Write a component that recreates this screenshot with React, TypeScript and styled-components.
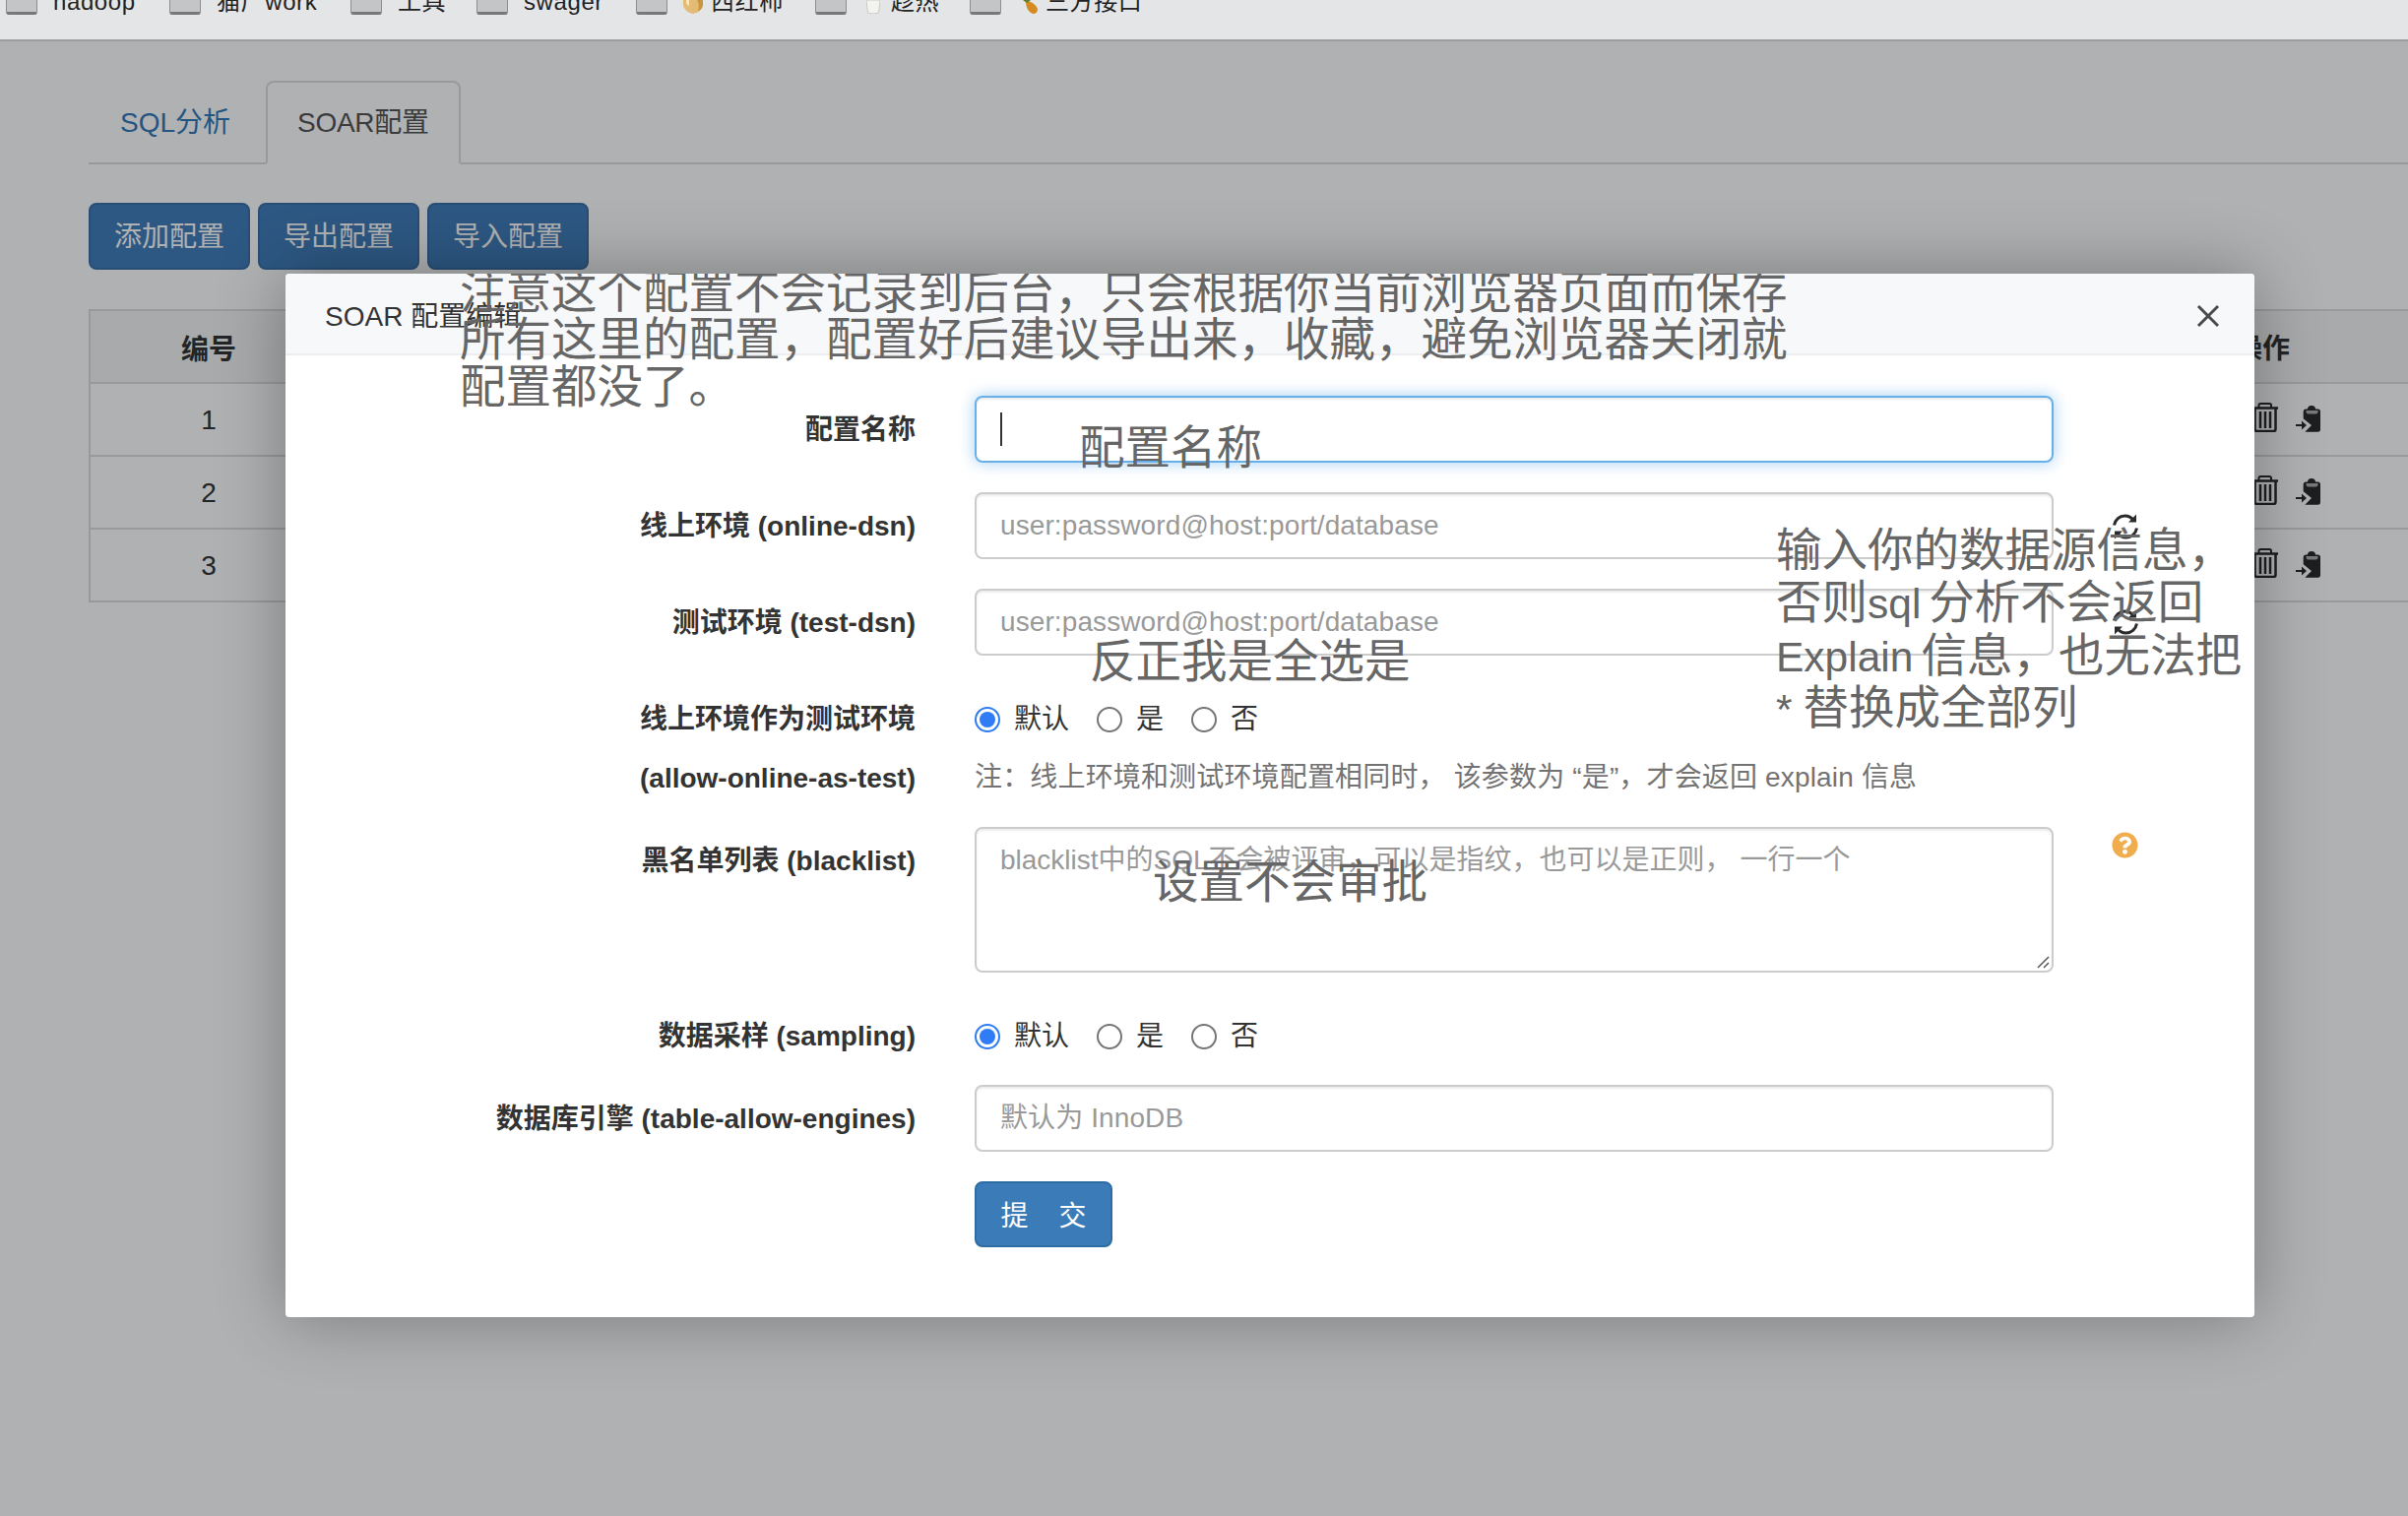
import React from 'react';
import styled, { createGlobalStyle } from 'styled-components';
import { FaQuestionCircle } from 'react-icons/fa';

const CJK = `"Liberation Sans", "Noto Sans CJK SC", sans-serif`;

const Global = createGlobalStyle`
  html, body { margin: 0; padding: 0; background: #fff; }
  body { font-family: ${CJK}; font-size: 28px; color: #333; }
  #root { width: 2446px; height: 1540px; overflow: hidden; position: relative; }
`;

const Browser = styled.div`
  width: 2446px;
  height: 1540px;
  position: relative;
  overflow: hidden;
`;

const BookmarkBar = styled.div`
  height: 42px;
  box-sizing: border-box;
  background: #e4e5e7;
  overflow: hidden;
  position: relative;
  z-index: 3;
  border-bottom: 2px solid #9c9d9f;
`;

const BookmarkTrack = styled.div`
  height: 16px;
  display: flex;
  align-items: flex-end;
  padding-left: 6px;
  font-size: 24px;
  line-height: 28px;
  letter-spacing: 0.6px;
  color: #222;
`;

const Bookmark = styled.div<{ $width: number }>`
  display: flex;
  align-items: flex-end;
  flex: none;
  width: ${(p) => p.$width}px;
  height: 16px;
`;

const Folder = styled.span`
  width: 32px;
  height: 15px;
  box-sizing: border-box;
  background: #c4c5c7;
  border: 1px solid #8d8e90;
  border-top: 0;
  border-bottom: 3px solid #77787a;
  border-radius: 0 0 3px 3px;
  flex: none;
  align-self: flex-start;
`;

const BookmarkIcon = styled.svg<{ $left: number }>`
  flex: none;
  align-self: flex-start;
  margin-left: ${(p) => p.$left}px;
`;

const BookmarkText = styled.span<{ $gap: number }>`
  margin-left: ${(p) => p.$gap}px;
  height: 16px;
  display: flex;
  align-items: flex-end;
  white-space: pre;
`;

const Page = styled.main`
  padding: 40px 0 0 90px;
`;

const Tabs = styled.nav`
  display: flex;
  height: 83px;
  border-bottom: 2px solid #ddd;
  box-sizing: content-box;
`;

const Tab = styled.a<{ $active?: boolean }>`
  box-sizing: border-box;
  height: 85px;
  padding: 21px 30px 19px;
  line-height: 40px;
  letter-spacing: ${(p) => (p.$active ? -0.3 : 0)}px;
  margin-left: ${(p) => (p.$active ? 4 : 0)}px;
  color: ${(p) => (p.$active ? '#555' : '#337ab7')};
  background: ${(p) => (p.$active ? '#fff' : 'transparent')};
  border: 2px solid ${(p) => (p.$active ? '#ddd' : 'transparent')};
  border-bottom-color: ${(p) => (p.$active ? '#fff' : 'transparent')};
  border-radius: 8px 8px 0 0;
`;

const Toolbar = styled.div`
  display: flex;
  gap: 8px;
  margin-top: 39px;
`;

const ToolButton = styled.button`
  width: 164px;
  height: 68px;
  background: #427ebb;
  color: #fff;
  border: 2px solid #3a70a8;
  border-radius: 8px;
  padding: 0 0 4px;
  font: inherit;
`;

const Table = styled.div`
  margin-top: 40px;
  width: 2500px;
  border-top: 2px solid #ddd;
  border-left: 2px solid #ddd;
`;

const TableRow = styled.div<{ $head?: boolean }>`
  display: grid;
  grid-template-columns: 240px 1fr;
  height: 74px;
  box-sizing: border-box;
  border-bottom: 2px solid #ddd;
  background: ${(p) => (p.$head ? '#f5f5f5' : 'transparent')};
  font-weight: ${(p) => (p.$head ? 700 : 400)};
  align-items: center;
`;

const IdCell = styled.div`
  text-align: center;
  color: #333;
  padding-top: 1px;
`;

const ActionCell = styled.div<{ $head?: boolean }>`
  display: flex;
  align-items: flex-end;
  padding-left: ${(p) => (p.$head ? 1938 : 1956)}px;
  margin-top: ${(p) => (p.$head ? 0 : -4)}px;
  color: #333;
  gap: 18px;
`;

const Backdrop = styled.div`
  position: absolute;
  inset: 42px 0 0 0;
  background: rgba(0, 2, 6, 0.31);
`;

const ModalShadow = styled.div`
  position: absolute;
  left: 290px;
  top: 278px;
  width: 2000px;
  height: 1060px;
  border-radius: 4px;
  box-shadow: 0 0 70px rgba(0, 0, 0, 0.32);
`;

const Modal = styled.section`
  position: absolute;
  left: 290px;
  top: 278px;
  width: 2000px;
  height: 1060px;
  background: #fff;
  border-radius: 4px;
  overflow: hidden;
`;

const ModalHead = styled.header`
  height: 83px;
  box-sizing: border-box;
  background: #f7f8fa;
  border-bottom: 2px solid #eceef1;
  padding: 0 40px;
  display: flex;
  align-items: center;
  justify-content: space-between;
  color: #333;
`;

const ModalTitle = styled.h4`
  margin: 0;
  font-weight: 400;
  font-size: 28px;
`;

const Close = styled.span`
  display: flex;
  margin: 5px -5px 0 0;
`;

const Form = styled.form`
  display: grid;
  grid-template-columns: 640px 1156px 1fr;
  padding-top: 41px;
`;

const Label = styled.label`
  grid-column: 1;
  text-align: right;
  font-weight: 700;
  line-height: 40px;
  color: #333;
  padding-top: 15px;
`;

const Control = styled.div<{ $bottom?: number }>`
  grid-column: 2;
  margin-left: 60px;
  margin-bottom: ${(p) => p.$bottom ?? 30}px;
`;

const Side = styled.div`
  grid-column: 3;
  padding-left: 59px;
  padding-top: 5px;
  color: #f0ad4e;
  display: flex;
  align-items: flex-start;
`;

const Input = styled.div<{ $focus?: boolean }>`
  height: 68px;
  box-sizing: border-box;
  border: 2px solid ${(p) => (p.$focus ? '#66afe9' : '#ccc')};
  border-radius: 8px;
  padding: 0 24px 1px;
  line-height: 38px;
  display: flex;
  align-items: center;
  color: #999;
  letter-spacing: 0.1px;
  box-shadow: ${(p) =>
    p.$focus
      ? 'inset 0 2px 2px rgba(0,0,0,.075), 0 0 16px rgba(102,175,233,.6)'
      : 'inset 0 2px 2px rgba(0,0,0,.075)'};
`;

const Caret = styled.span`
  width: 2px;
  height: 34px;
  background: #333;
`;

const TextArea = styled.div`
  height: 148px;
  box-sizing: border-box;
  border: 2px solid #ccc;
  border-radius: 8px;
  padding: 12px 24px;
  line-height: 40px;
  color: #999;
  white-space: pre;
  position: relative;
  box-shadow: inset 0 2px 2px rgba(0, 0, 0, 0.075);
`;

const Grip = styled.svg`
  position: absolute;
  right: 2px;
  bottom: 2px;
`;

const RadioRow = styled.div`
  display: flex;
  align-items: center;
  padding-top: 14px;
  height: 41px;
  line-height: 40px;
`;

const RadioCircle = styled.span<{ $checked?: boolean }>`
  width: 26px;
  height: 26px;
  box-sizing: border-box;
  border-radius: 50%;
  border: 2px solid ${(p) => (p.$checked ? '#2f7cf6' : '#767676')};
  padding: 3px;
  margin-right: 14px;
  flex: none;
  &::after {
    content: '';
    display: ${(p) => (p.$checked ? 'block' : 'none')};
    width: 100%;
    height: 100%;
    border-radius: 50%;
    background: #2f7cf6;
  }
`;

const RadioText = styled.span`
  margin-right: 28px;
  color: #333;
`;

const Help = styled.div`
  padding-top: 14px;
  line-height: 40px;
  color: #737373;
  white-space: pre;
  letter-spacing: 0.16px;
`;

const Submit = styled.button`
  width: 140px;
  height: 67px;
  background: #3b7bb8;
  color: #fff;
  border: 2px solid #2e6da4;
  border-radius: 8px;
  font: inherit;
  padding: 0 0 2px;
  white-space: pre;
`;

const Note = styled.div<{ $x: number; $y: number; $lh?: number }>`
  position: absolute;
  left: ${(p) => p.$x}px;
  top: ${(p) => p.$y}px;
  font-family: "Noto Sans CJK SC", sans-serif;
  font-size: 46.5px;
  line-height: ${(p) => p.$lh ?? 48}px;
  color: #666;
  white-space: pre;
`;

const Latin = styled.span<{ $after?: number }>`
  font-family: "Liberation Sans", sans-serif;
  font-size: 42.5px;
  line-height: 0;
  margin-right: ${(p) => p.$after ?? 8}px;
`;

const RefreshIcon = styled.svg<{ $x: number; $y: number }>`
  position: absolute;
  left: ${(p) => p.$x}px;
  top: ${(p) => p.$y}px;
`;

const Refresh = ({ x, y }: { x: number; y: number }) => (
  <RefreshIcon $x={x} $y={y} width="28" height="28" viewBox="0 0 28 28" fill="none" stroke="#2b2b2b" strokeWidth="3">
    <path d="M2.500 12.500C3.500 7 8 3 13.500 3c3.600 0 6.600 1.700 8.600 4.400" />
    <path d="M25 1.500v8h-8z" fill="#2b2b2b" stroke="none" />
    <path d="M25.500 15.500c-1 5.500-5.500 9.500-11 9.500-3.600 0-6.600-1.700-8.600-4.400" />
    <path d="M3 26.500v-8h8z" fill="#2b2b2b" stroke="none" />
  </RefreshIcon>
);

const Trash = () => (
  <svg width="26" height="30" viewBox="0 0 26 30" fill="none" stroke="#2a2a2a" strokeWidth="2.500">
    <path d="M0 5.500h26" />
    <path d="M6.500 5V2.800C6.500 1.800 7.300 1 8.300 1h8.900c1 0 1.800.8 1.800 1.800V5" strokeWidth="2" />
    <path d="M2.500 6v21c0 1.200.8 2 2 2h17c1.200 0 2-.8 2-2V6" />
    <path d="M8 9v17M13 9v17M18 9v17" />
  </svg>
);

const PasteIcon = () => (
  <svg width="26" height="27" viewBox="0 0 26 27" fill="#2a2a2a">
    <path d="M7.700 6Q7.700 3.500 10 3.500H12Q12 0 16 0T20 3.500H22.500Q25 3.500 25 6V24.500Q25 26.700 22.500 26.700H9.300L16 20L7.700 13.300Z" />
    <path d="M10.500 5H22.500V6Q22.500 8.500 20 8.500H13Q10.500 8.500 10.500 6Z" fill="#aeafb1" />
    <path d="M0 19h6v-3.500l5 4.500-5 4.500V21H0z" />
  </svg>
);

const CloseIcon = () => (
  <svg width="24" height="24" viewBox="0 0 24 24" fill="none" stroke="#4a4a4a" strokeWidth="3">
    <path d="M2 2l20 20M22 2L2 22" />
  </svg>
);

const PotatoIcon = () => (
  <BookmarkIcon $left={16} width="20" height="14" viewBox="0 0 20 14">
    <path d="M0 0H20V5Q19 12 10 14Q1 12 0 5Z" fill="#e3bb74" />
    <path d="M14 0H20V5Q19.500 9 15 11.500Q17 5 14 0Z" fill="#c9963f" />
    <path d="M3 0H6V6Q4 6 3 3Z" fill="#f6e6c2" />
  </BookmarkIcon>
);

const MilkIcon = () => (
  <BookmarkIcon $left={20} width="14" height="14" viewBox="0 0 14 14">
    <path d="M0 0H14L12.500 13Q7 15 1.500 13Z" fill="#f3f3f0" stroke="#c9c9c6" strokeWidth="1" />
  </BookmarkIcon>
);

const CarrotIcon = () => (
  <BookmarkIcon $left={22} width="16" height="14" viewBox="0 0 16 14">
    <path d="M3 1Q11 1 15 9Q15 14 10 14Q3 11 3 1Z" fill="#d68a22" />
    <path d="M0 0H8L4 3Z" fill="#5f7d2c" />
  </BookmarkIcon>
);

const bookmarks: { width: number; text: string; gap: number; icon?: React.ReactNode }[] = [
  { width: 166, text: 'nadoop', gap: 16 },
  { width: 184, text: '猫厂work', gap: 16 },
  { width: 128, text: '工具', gap: 16 },
  { width: 162, text: 'swager', gap: 16 },
  { width: 182, text: '西红柿', gap: 8, icon: <PotatoIcon /> },
  { width: 157, text: '趁热', gap: 11, icon: <MilkIcon /> },
  { width: 200, text: '三方接口', gap: 7, icon: <CarrotIcon /> },
];

const rows = ['1', '2', '3'];

const Radios = () => (
  <RadioRow>
    <RadioCircle $checked />
    <RadioText>默认</RadioText>
    <RadioCircle />
    <RadioText>是</RadioText>
    <RadioCircle />
    <RadioText>否</RadioText>
  </RadioRow>
);

export default function App() {
  return (
    <Browser>
      <Global />
      <BookmarkBar>
        <BookmarkTrack>
          {bookmarks.map((b) => (
            <Bookmark key={b.text} $width={b.width}>
              <Folder />
              {b.icon}
              <BookmarkText $gap={b.gap}>{b.text}</BookmarkText>
            </Bookmark>
          ))}
        </BookmarkTrack>
      </BookmarkBar>
      <Page>
        <Tabs>
          <Tab>SQL分析</Tab>
          <Tab $active>SOAR配置</Tab>
        </Tabs>
        <Toolbar>
          <ToolButton>添加配置</ToolButton>
          <ToolButton>导出配置</ToolButton>
          <ToolButton>导入配置</ToolButton>
        </Toolbar>
        <Table>
          <TableRow $head>
            <IdCell>编号</IdCell>
            <ActionCell $head>操作</ActionCell>
          </TableRow>
          {rows.map((r) => (
            <TableRow key={r}>
              <IdCell>{r}</IdCell>
              <ActionCell>
                <Trash />
                <PasteIcon />
              </ActionCell>
            </TableRow>
          ))}
        </Table>
      </Page>
      <Backdrop />
      <ModalShadow />
      <Modal>
        <ModalHead>
          <ModalTitle>SOAR 配置编辑</ModalTitle>
          <Close>
            <CloseIcon />
          </Close>
        </ModalHead>
        <Form>
          <Label>配置名称</Label>
          <Control>
            <Input $focus>
              <Caret />
            </Input>
          </Control>
          <Label>线上环境 (online-dsn)</Label>
          <Control>
            <Input>user:password@host:port/database</Input>
          </Control>
          <Label>测试环境 (test-dsn)</Label>
          <Control>
            <Input>user:password@host:port/database</Input>
          </Control>
          <Label>线上环境作为测试环境</Label>
          <Control $bottom={5}>
            <Radios />
          </Control>
          <Label>(allow-online-as-test)</Label>
          <Control>
            <Help>{'注：线上环境和测试环境配置相同时， 该参数为 “是”，才会返回 explain 信息'}</Help>
          </Control>
          <Label>黑名单列表 (blacklist)</Label>
          <Control>
            <TextArea>
              {'blacklist中的SQL不会被评审，可以是指纹，也可以是正则， 一行一个'}
              <Grip width="14" height="14" viewBox="0 0 14 14" stroke="#555" strokeWidth="1.500">
                <path d="M2 13L13 2M8 13l5-5" />
              </Grip>
            </TextArea>
          </Control>
          <Side>
            <FaQuestionCircle size={27} />
          </Side>
          <Label>数据采样 (sampling)</Label>
          <Control $bottom={29}>
            <Radios />
          </Control>
          <Label>数据库引擎 (table-allow-engines)</Label>
          <Control>
            <Input>默认为 InnoDB</Input>
          </Control>
          <Control $bottom={0}>
            <Submit>{'提    交'}</Submit>
          </Control>
        </Form>
        <Refresh x={1855} y={243} />
        <Refresh x={1855} y={340} />
        <Note $x={177} $y={-9}>
          {'注意这个配置不会记录到后台，只会根据你当前浏览器页面而保存\n所有这里的配置，配置好后建议导出来，收藏，避免浏览器关闭就\n配置都没了。'}
        </Note>
        <Note $x={806} $y={149}>配置名称</Note>
        <Note $x={1514} $y={250} $lh={53.4}>
          输入你的数据源信息，{'\n'}否则<Latin>sql</Latin>分析不会返回{'\n'}
          <Latin>Explain</Latin>信息，也无法把{'\n'}
          <Latin $after={11}>*</Latin>替换成全部列
        </Note>
        <Note $x={817} $y={366}>反正我是全选是</Note>
        <Note $x={881} $y={590}>设置不会审批</Note>
      </Modal>
    </Browser>
  );
}
